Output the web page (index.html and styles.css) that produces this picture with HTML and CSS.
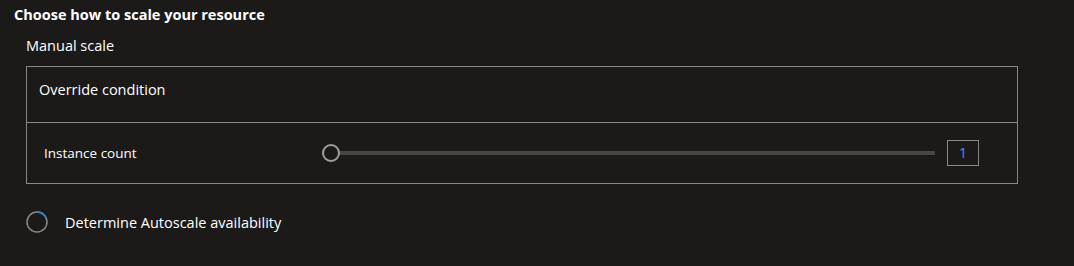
FILE: index.html
```html
<!DOCTYPE html>
<html>
<head>
    <meta charset="utf-8">
    <title>Scale settings</title>
    <link rel="stylesheet" href="styles.css">
</head>
<body>
<div class="page">
    <h2 class="title">Choose how to scale your resource</h2>
    <div class="manual">Manual scale</div>

    <div class="box">
        <div class="box_head">Override condition</div>
        <div class="box_row">
            <span class="row_label">Instance count</span>
            <div class="slider">
                <span class="thumb"></span>
                <span class="track"></span>
            </div>
            <span class="count">1</span>
        </div>
    </div>

    <div class="auto">
        <svg class="spinner" width="22" height="22" viewBox="0 0 22 22">
            <circle cx="11" cy="11" r="10" fill="none" stroke="#8a8886" stroke-width="1.5"/>
            <path d="M11 1 A10 10 0 0 1 19.7 6" fill="none" stroke="#2b88d8" stroke-width="1.5"/>
        </svg>
        <span class="auto_text">Determine Autoscale availability</span>
    </div>
</div>
</body>
</html>
```

FILE: styles.css
```css
body {
    margin: 0;
    background-color: #1b1a19;
    color: #ffffff;
    font-family: "Open Sans", "Noto Sans", sans-serif;
}

.page {
    padding: 5px 14px 0 14px;
}

.title {
    margin: 0;
    font-size: 14.5px;
    font-weight: 700;
    line-height: 20px;
}

.manual {
    margin: 11px 0 0 12px;
    font-size: 14.5px;
    line-height: 20px;
}

.box {
    margin: 10px 0 0 12px;
    width: 990px;
    border: 1px solid #8a8886;
}

.box_head {
    height: 56px;
    padding: 13px 0 0 12px;
    box-sizing: border-box;
    font-size: 14.5px;
    line-height: 20px;
    border-bottom: 1px solid #8a8886;
}

.box_row {
    display: flex;
    align-items: center;
    height: 60px;
    padding: 0 38px 0 17px;
}

.row_label {
    width: 278px;
    font-size: 13.5px;
}

.slider {
    flex: 1;
    display: flex;
    align-items: center;
    margin-right: 12px;
}

.thumb {
    width: 14px;
    height: 14px;
    border: 2px solid #a19f9d;
    border-radius: 50%;
}

.track {
    flex: 1;
    height: 4px;
    background-color: #484644;
}

.count {
    width: 30px;
    height: 24px;
    border: 1px solid #8a8886;
    color: #4f8ef7;
    font-size: 14px;
    line-height: 24px;
    text-align: center;
}

.auto {
    display: flex;
    align-items: center;
    margin: 27px 0 0 12px;
}

.auto_text {
    margin-left: 17px;
    font-size: 14.5px;
}
```
